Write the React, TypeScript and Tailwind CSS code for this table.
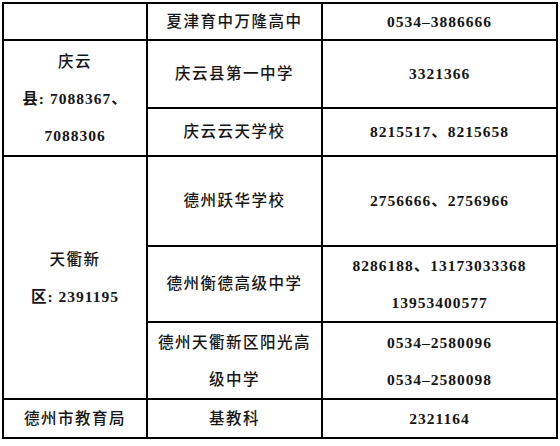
import type { ReactNode } from 'react'

function Cell({ children, rowSpan, cjk, multi }: { children?: ReactNode; rowSpan?: number; cjk?: boolean; multi?: boolean }) {
  return (
    <td
      rowSpan={rowSpan}
      className={`border-2 border-black p-0 text-center align-middle ${multi ? 'leading-[37px]' : 'leading-[22px]'} ${cjk ? 'tracking-[1.5px] font-medium' : 'tracking-[1px] font-bold'}`}
    >
      {children}
    </td>
  )
}

export default function App() {
  return (
    <div
      lang="zh-CN"
      className="w-[560px] h-[446px] bg-white pl-[2px] pt-[2px] text-[15.5px] text-[#151515] font-['Liberation_Serif','Noto_Sans_CJK_SC',serif]"
    >
      <table className="w-[554px] table-fixed border-collapse">
        <colgroup>
          <col className="w-[144px]" />
          <col className="w-[175px]" />
          <col className="w-[235px]" />
        </colgroup>
        <tbody>
          <tr className="h-[37px]">
            <Cell />
            <Cell cjk>夏津育中万隆高中</Cell>
            <Cell>0534–3886666</Cell>
          </tr>
          <tr className="h-[68px]">
            <Cell rowSpan={2} cjk multi>
              庆云
              <br />
              <span className="font-bold tracking-[1px]">县: 7088367、</span>
              <br />
              <span className="font-bold tracking-[1px]">7088306</span>
            </Cell>
            <Cell cjk>庆云县第一中学</Cell>
            <Cell>3321366</Cell>
          </tr>
          <tr className="h-[48px]">
            <Cell cjk>庆云云天学校</Cell>
            <Cell>8215517、8215658</Cell>
          </tr>
          <tr className="h-[90px]">
            <Cell rowSpan={3} cjk multi>
              天衢新
              <br />
              <span className="font-bold tracking-[1px]">区: 2391195</span>
            </Cell>
            <Cell cjk>德州跃华学校</Cell>
            <Cell>2756666、2756966</Cell>
          </tr>
          <tr className="h-[76px]">
            <Cell cjk>德州衡德高级中学</Cell>
            <Cell multi>
              8286188、13173033368
              <br />
              13953400577
            </Cell>
          </tr>
          <tr className="h-[77px]">
            <Cell cjk multi>
              德州天衢新区阳光高
              <br />
              级中学
            </Cell>
            <Cell multi>
              0534–2580096
              <br />
              0534–2580098
            </Cell>
          </tr>
          <tr className="h-[39px]">
            <Cell cjk>德州市教育局</Cell>
            <Cell cjk>基教科</Cell>
            <Cell>2321164</Cell>
          </tr>
        </tbody>
      </table>
    </div>
  )
}
